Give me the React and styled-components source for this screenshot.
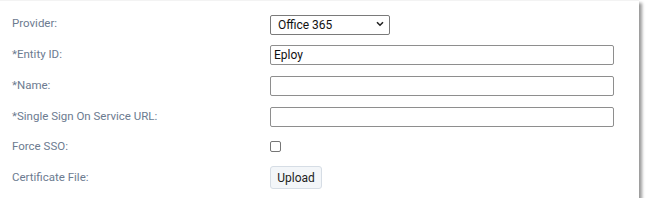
import React from 'react'
import styled, { createGlobalStyle } from 'styled-components'

const GlobalStyle = createGlobalStyle`
  html, body {
    margin: 0;
    padding: 0;
    background: #ffffff;
  }
  body {
    font-family: Roboto, "Liberation Sans", Arial, sans-serif;
  }
`

const Panel = styled.div`
  width: 639px;
  height: 198px;
  box-sizing: border-box;
  background: #ffffff;
  border-top: 1px solid #f3f3f3;
  box-shadow: 3px 3px 3px rgba(0, 0, 0, 0.4);
  padding: 13px 0 0 12px;
  display: flex;
  flex-direction: column;
  gap: 11px;
`

const Row = styled.div`
  display: grid;
  grid-template-columns: 258px 344px;
  align-items: center;
  height: ${(p) => p.$h}px;
`

const Label = styled.label`
  font-size: 11.5px;
  color: #6c7b90;
  line-height: 1;
`

const SelectWrap = styled.div`
  position: relative;
  width: 120px;
  height: 20px;
`

const Select = styled.select`
  appearance: none;
  width: 100%;
  height: 100%;
  box-sizing: border-box;
  border: 1px solid #7a7a7a;
  border-radius: 2px;
  background: #fff;
  padding: 0 0 0 7px;
  font-family: Roboto, "Liberation Sans", Arial, sans-serif;
  font-size: 12px;
  font-weight: 400;
  color: #111;
`

const Chevron = styled.svg`
  position: absolute;
  right: 6px;
  top: 7px;
  pointer-events: none;
`

const TextInput = styled.input`
  width: 344px;
  height: 20px;
  box-sizing: border-box;
  border: 1px solid #8e8e8e;
  border-radius: 2px;
  padding: 0 3px;
  font-family: Roboto, "Liberation Sans", Arial, sans-serif;
  font-size: 12px;
  font-weight: 400;
  color: #111;
  outline: none;
`

const Check = styled.input`
  appearance: none;
  margin: 0;
  width: 11px;
  height: 11px;
  box-sizing: border-box;
  border: 1px solid #767676;
  border-radius: 2px;
  background: #fff;
`

const Button = styled.button`
  justify-self: start;
  height: 23px;
  width: 52px;
  box-sizing: border-box;
  border: 1px solid #d6dde5;
  border-radius: 3px;
  background: #f3f6f9;
  font-family: Roboto, "Liberation Sans", Arial, sans-serif;
  font-size: 12px;
  font-weight: 400;
  color: #222;
  padding: 0;
`

const fields = [
  { label: '*Entity ID:', value: 'Eploy' },
  { label: '*Name:', value: '' },
  { label: '*Single Sign On Service URL:', value: '' },
]

const App = () => {
  return (
    <>
      <GlobalStyle />
      <Panel>
        <Row $h={20}>
          <Label>Provider:</Label>
          <SelectWrap>
            <Select defaultValue="o365">
              <option value="o365">Office 365</option>
            </Select>
            <Chevron width="8" height="6" viewBox="0 0 8 6">
              <path d="M1 1.2 L4 4.2 L7 1.2" fill="none" stroke="#222" strokeWidth="1.6" />
            </Chevron>
          </SelectWrap>
        </Row>
        {fields.map((f) => (
          <Row $h={20} key={f.label}>
            <Label>{f.label}</Label>
            <TextInput type="text" defaultValue={f.value} />
          </Row>
        ))}
        <Row $h={17}>
          <Label>Force SSO:</Label>
          <Check type="checkbox" />
        </Row>
        <Row $h={23}>
          <Label>Certificate File:</Label>
          <Button type="button">Upload</Button>
        </Row>
      </Panel>
    </>
  )
}

export default App
